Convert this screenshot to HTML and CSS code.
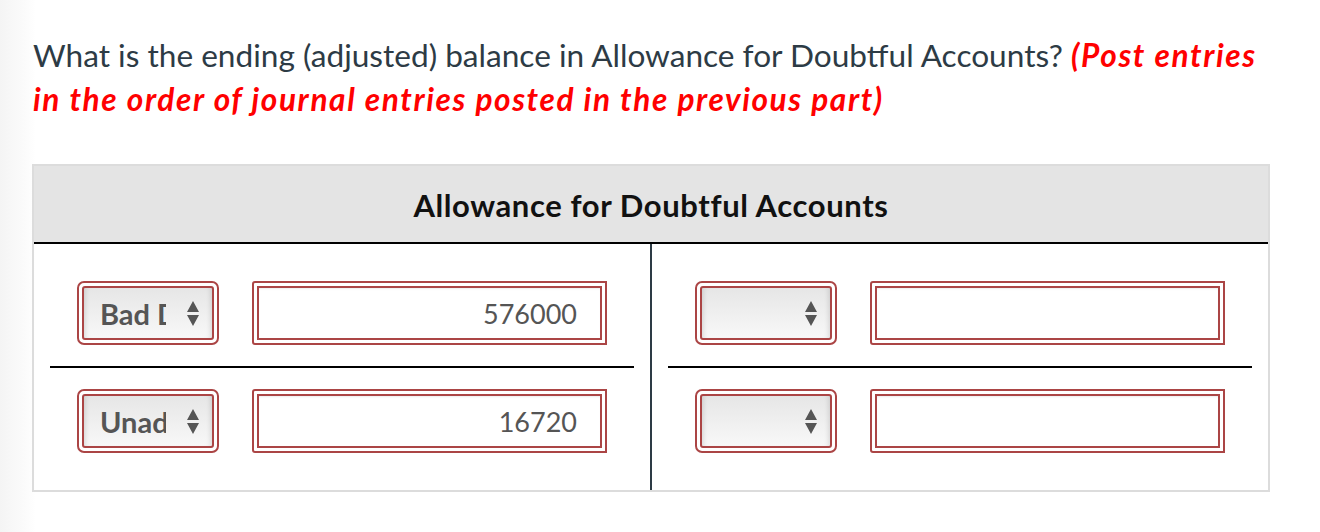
FILE: index.html
```html
<!DOCTYPE html>
<html>
<head>
<meta charset="utf-8">
<link rel="stylesheet" href="styles.css">
</head>
<body>
<div class="page">
  <p class="question">What is the ending (adjusted) balance in Allowance for Doubtful Accounts? <span class="note">(Post entries in the order of journal entries posted in the previous part)</span></p>

  <div class="taccount">
    <div class="t-head">Allowance for Doubtful Accounts</div>
    <div class="t-body">
      <div class="t-col">
        <div class="entry">
          <div class="sel-wrap"><div class="sel"><span class="sel-text">Bad Debt Expense</span><svg class="arrows" width="12" height="25" viewBox="0 0 12 25"><path d="M0 11 L6 0 L12 11 Z M0 14 L12 14 L6 25 Z" fill="#555"/></svg></div></div>
          <div class="inp-wrap"><div class="inp">576000</div></div>
        </div>
        <div class="entry">
          <div class="sel-wrap"><div class="sel"><span class="sel-text">Unadjusted Balance</span><svg class="arrows" width="12" height="25" viewBox="0 0 12 25"><path d="M0 11 L6 0 L12 11 Z M0 14 L12 14 L6 25 Z" fill="#555"/></svg></div></div>
          <div class="inp-wrap"><div class="inp">16720</div></div>
        </div>
      </div>
      <div class="t-col t-col-right">
        <div class="entry">
          <div class="sel-wrap"><div class="sel"><span class="sel-text"></span><svg class="arrows" width="12" height="25" viewBox="0 0 12 25"><path d="M0 11 L6 0 L12 11 Z M0 14 L12 14 L6 25 Z" fill="#555"/></svg></div></div>
          <div class="inp-wrap"><div class="inp"></div></div>
        </div>
        <div class="entry">
          <div class="sel-wrap"><div class="sel"><span class="sel-text"></span><svg class="arrows" width="12" height="25" viewBox="0 0 12 25"><path d="M0 11 L6 0 L12 11 Z M0 14 L12 14 L6 25 Z" fill="#555"/></svg></div></div>
          <div class="inp-wrap"><div class="inp"></div></div>
        </div>
      </div>
    </div>
  </div>
</div>
</body>
</html>
```

FILE: styles.css
```css
* { box-sizing: border-box; }
html, body { margin: 0; padding: 0; }
body {
  width: 1320px;
  height: 532px;
  overflow: hidden;
  background: linear-gradient(to right, #f4f4f4 0, #fbfbfb 25px, #ffffff 36px);
  font-family: Lato, "Open Sans", sans-serif;
}
.page {
  padding: 33px 0 0 32px;
}
.question {
  margin: 0;
  width: 1250px;
  padding-left: 1px;
  font-size: 31.6px;
  line-height: 44px;
  color: #2d3b45;
}
.note {
  color: #ff0000;
  font-weight: bold;
  font-style: italic;
  letter-spacing: 1.6px;
}
.taccount {
  margin-top: 43px;
  width: 1238px;
  border: 2px solid #dcdcdc;
}
.t-head {
  height: 78px;
  background: #e4e4e4;
  border-bottom: 2px solid #000;
  display: flex;
  align-items: center;
  justify-content: center;
  font-weight: bold;
  font-size: 31px;
  letter-spacing: 0.6px;
  color: #111;
  padding-top: 2px;
}
.t-body {
  display: grid;
  grid-template-columns: 616px 618px;
}
.t-col {
  padding: 16px;
}
.t-col-right {
  border-left: 2px solid #2d3b45;
}
.entry {
  display: flex;
  gap: 33px;
  padding: 21px 27px;
}
.entry + .entry {
  border-top: 2px solid #000;
}
.sel-wrap {
  width: 142px;
  height: 64px;
  border: 2px solid #ab4545;
  border-radius: 7px;
  padding: 3px;
}
.sel {
  height: 100%;
  border: 2px solid #ab4545;
  border-radius: 3px;
  background: linear-gradient(#e6e6e6, #f8f8f8);
  box-shadow: inset 5px 0 6px -5px rgba(0,0,0,0.18), inset -5px 0 6px -5px rgba(0,0,0,0.18);
  display: flex;
  align-items: center;
  padding: 0 13px 0 16px;
}
.sel-text {
  width: 66px;
  overflow: hidden;
  white-space: nowrap;
  font-size: 29px;
  font-weight: bold;
  color: #555;
}
.arrows {
  margin-left: auto;
  flex: none;
}
.inp-wrap {
  width: 356px;
  height: 64px;
  border: 2px solid #ab4545;
  border-radius: 3px 0 0 3px;
  padding: 3px;
}
.inp {
  height: 100%;
  border: 2px solid #ab4545;
  background: #fff;
  box-shadow: inset 0 2px 2px -1px rgba(0,0,0,0.08);
  display: flex;
  align-items: center;
  justify-content: flex-end;
  padding-right: 23px;
  font-size: 27px;
  color: #555;
}
```
